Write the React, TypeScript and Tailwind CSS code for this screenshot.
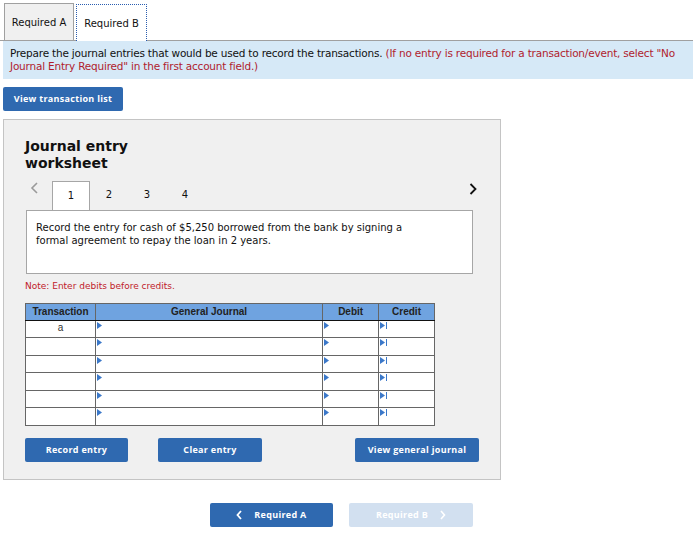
import type { ReactNode } from "react"

const verdana = "font-['DejaVu_Sans','Verdana',sans-serif]"
const arial = "font-['Liberation_Sans','Arial',sans-serif]"
const btnFont = "font-['Open_Sans','Roboto',sans-serif]"

const rows = ["a", "", "", "", "", ""]

function Marker({ bar }: { bar?: boolean }) {
  return (
    <span className="absolute left-[1px] top-[1px] flex items-start">
      <svg width="5" height="7" viewBox="0 0 5 7">
        <path d="M0 0 L5 3.5 L0 7 Z" fill="#3b78c9" />
      </svg>
      {bar ? <span className="ml-[1px] h-[7px] w-[1px] bg-[#3b78c9]" /> : null}
    </span>
  )
}

function BlueButton({ children, className = "" }: { children: ReactNode; className?: string }) {
  return (
    <button
      type="button"
      className={`flex h-[24px] shrink-0 items-center justify-center rounded-[2px] bg-[#2f69b0] text-[9px] font-bold tracking-[0.3px] text-white ${btnFont} ${className}`}
    >
      {children}
    </button>
  )
}

export default function App() {
  return (
    <div className={`relative h-[533px] w-[693px] overflow-hidden bg-white text-[#111] ${verdana}`}>
      {/* tabs */}
      <div className="flex h-[41px] items-end border-b border-[#a0a0a0] pl-[4px]">
        <div className="flex h-[37px] w-[70px] items-center justify-center border border-b-0 border-[#a0a0a0] bg-[#f0f0f0] text-[10px]">
          Required A
        </div>
        <div className="relative top-[1px] ml-[2px] flex h-[37px] w-[71px] items-center justify-center border border-b-0 border-dotted border-[#2a5db0] bg-white text-[10px]">
          Required B
        </div>
      </div>

      <div className="ml-[3px] bg-[#d6e9f7] px-[7px] pb-[6px] pt-[6px] text-[10.5px] leading-[13px] tracking-[-0.2px]">
        Prepare the journal entries that would be used to record the transactions.{" "}
        <span className="text-[#b01c2e]">
          (If no entry is required for a transaction/event, select "No Journal Entry Required" in the first account field.)
        </span>
      </div>

      <div className="ml-[3px] mt-[8px]">
        <BlueButton className="w-[120px]">View transaction list</BlueButton>
      </div>

      {/* worksheet panel */}
      <div className="ml-[3px] mt-[8px] h-[361px] w-[498px] border border-[#c4c4c4] bg-[#f0f0f0] pl-[21px] pr-[10px] pt-[18px]">
        <h2 className="text-[14px] font-bold leading-[17px]">
          Journal entry
          <br />
          worksheet
        </h2>

        <div className="relative mt-[9px] flex h-[30px] w-[447px] items-end">
          <span className="absolute left-[5px] top-[1px]">
            <svg width="8" height="12" viewBox="0 0 8 12">
              <path d="M7 1 L2 6 L7 11" stroke="#9a9a9a" strokeWidth="1.6" fill="none" />
            </svg>
          </span>
          <div className="ml-[27px] flex h-[30px] w-[38px] items-start justify-center border border-b-0 border-[#a6a6a6] bg-white pt-[6px] text-[10px]">
            1
          </div>
          <div className="flex h-[30px] w-[38px] items-start justify-center pt-[6px] text-[10px]">2</div>
          <div className="flex h-[30px] w-[38px] items-start justify-center pt-[6px] text-[10px]">3</div>
          <div className="flex h-[30px] w-[38px] items-start justify-center pt-[6px] text-[10px]">4</div>
          <span className="absolute right-[-5px] top-[2px]">
            <svg width="8" height="12" viewBox="0 0 8 12">
              <path d="M1.5 1 L6.5 6 L1.5 11" stroke="#111" strokeWidth="1.8" fill="none" />
            </svg>
          </span>
        </div>

        <div className="relative -mt-[1px] ml-[1px] h-[64px] w-[447px] border border-[#a6a6a6] bg-white px-[9px] pt-[10px] text-[10px] leading-[13px]">
          Record the entry for cash of $5,250 borrowed from the bank by signing a
          <br />
          formal agreement to repay the loan in 2 years.
        </div>

        <p className="mt-[6px] text-[9px] text-[#c0202a]">Note: Enter debits before credits.</p>

        <table className={`mt-[9px] w-[410px] border-collapse text-[10px] ${arial}`}>
          <thead>
            <tr className="h-[17px] bg-[#6fa3e0] text-[#222]">
              <th className="w-[70px] border-[1.5px] border-[#666] border-b-[#111] p-0 font-bold">Transaction</th>
              <th className="w-[228px] border-[1.5px] border-[#666] border-b-[#111] p-0 font-bold">General Journal</th>
              <th className="w-[56px] border-[1.5px] border-[#666] border-b-[#111] p-0 font-bold">Debit</th>
              <th className="w-[56px] border-[1.5px] border-[#666] border-b-[#111] p-0 font-bold">Credit</th>
            </tr>
          </thead>
          <tbody>
            {rows.map((value, index) => (
              <tr key={index} className="h-[17.5px] bg-white">
                <td className="border-[1.5px] border-[#666] p-0 text-center align-top leading-[14px] text-[#333]">{value}</td>
                <td className="relative border-[1.5px] border-[#666] p-0">
                  <Marker />
                </td>
                <td className="relative border-[1.5px] border-[#666] p-0">
                  <Marker />
                </td>
                <td className="relative border-[1.5px] border-[#666] p-0">
                  <Marker bar />
                </td>
              </tr>
            ))}
          </tbody>
        </table>

        <div className="mt-[12px] flex items-center">
          <BlueButton className="w-[103px]">Record entry</BlueButton>
          <BlueButton className="ml-[30px] w-[104px]">Clear entry</BlueButton>
          <BlueButton className="ml-[93px] w-[124px]">View general journal</BlueButton>
        </div>
      </div>

      {/* bottom nav */}
      <div className="mt-[23px] flex pl-[210px]">
        <BlueButton className="w-[123px] gap-[12px]">
          <svg width="6" height="10" viewBox="0 0 6 10">
            <path d="M5 1 L1.5 5 L5 9" stroke="#fff" strokeWidth="1.8" fill="none" />
          </svg>
          <span>Required A</span>
        </BlueButton>
        <button
          type="button"
          className={`ml-[16px] flex h-[24px] w-[124px] items-center justify-center gap-[12px] rounded-[2px] bg-[#d2e0f0] text-[9px] font-bold tracking-[0.3px] text-white ${btnFont}`}
        >
          <span>Required B</span>
          <svg width="6" height="10" viewBox="0 0 6 10">
            <path d="M1 1 L4.5 5 L1 9" stroke="#fff" strokeWidth="1.6" fill="none" />
          </svg>
        </button>
      </div>
    </div>
  )
}
